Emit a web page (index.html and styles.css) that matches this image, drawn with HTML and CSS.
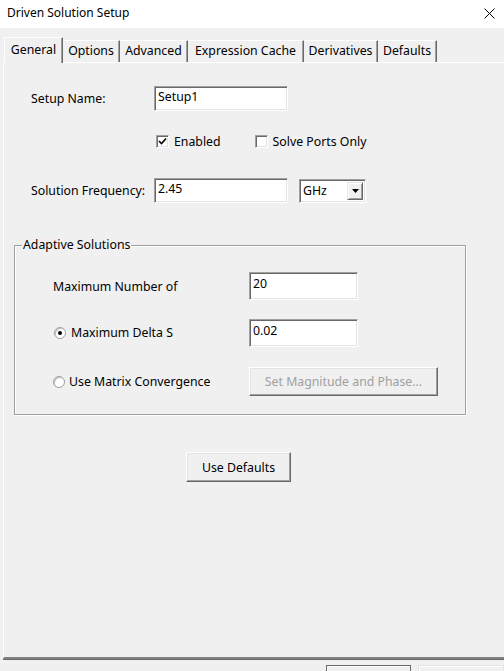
FILE: index.html
```html
<!DOCTYPE html>
<html>
<head>
<meta charset="utf-8">
<link rel="stylesheet" href="styles.css">
</head>
<body>
<div class="window">
  <div class="titlebar">
    <span class="title">Driven Solution Setup</span>
    <svg class="close" width="11" height="11" viewBox="0 0 11 11"><path d="M0.5 0.5 L10.5 10.5 M10.5 0.5 L0.5 10.5" stroke="#000" stroke-width="1"/></svg>
  </div>
  <div class="body">
    <div class="tabs">
      <div class="tab active t-general">General</div>
      <div class="tab t-options">Options</div>
      <div class="tab t-advanced">Advanced</div>
      <div class="tab t-cache">Expression Cache</div>
      <div class="tab t-deriv">Derivatives</div>
      <div class="tab t-defaults">Defaults</div>
    </div>
    <div class="page">
      <div class="row row-name">
        <span class="label">Setup Name:</span>
        <div class="edit edit-wide">Setup1</div>
      </div>
      <div class="row row-checks">
        <span class="check checked"><svg width="9" height="9" viewBox="0 0 9 9"><path d="M1 4 L3.5 6.5 L8 1.5" fill="none" stroke="#000" stroke-width="1.6"/></svg></span>
        <span class="check-text">Enabled</span>
        <span class="check check2"></span>
        <span class="check-text">Solve Ports Only</span>
      </div>
      <div class="row row-freq">
        <span class="label">Solution Frequency:</span>
        <div class="edit edit-wide">2.45</div>
        <div class="combo">
          <span class="combo-text">GHz</span>
          <span class="combo-btn"><svg width="7" height="4" viewBox="0 0 7 4"><path d="M0 0 H7 L3.5 4 Z" fill="#000"/></svg></span>
        </div>
      </div>
      <div class="group">
        <span class="legend">Adaptive Solutions</span>
        <div class="grow grow1">
          <span class="glabel">Maximum Number of</span>
          <div class="edit edit-small">20</div>
        </div>
        <div class="grow grow2">
          <span class="radio on"><span class="dot"></span></span>
          <span class="glabel-r">Maximum Delta S</span>
          <div class="edit edit-small">0.02</div>
        </div>
        <div class="grow grow3">
          <span class="radio radio3"></span>
          <span class="glabel-r3">Use Matrix Convergence</span>
          <div class="button disabled">Set Magnitude and Phase...</div>
        </div>
      </div>
      <div class="defaults-row">
        <div class="button defaults">Use Defaults</div>
      </div>
    </div>
    <div class="bottom">
      <div class="bbtn bbtn-default"></div>
      <div class="bbtn"></div>
    </div>
  </div>
</div>
</body>
</html>
```
FILE: styles.css
```css
* { box-sizing: border-box; }
html, body { margin: 0; padding: 0; }
body {
  width: 504px;
  height: 671px;
  overflow: hidden;
  background: #f0f0f0;
  font-family: "Noto Sans", "Open Sans", sans-serif;
  font-size: 12px;
  color: #000;
}
.window { width: 504px; height: 671px; display: flex; flex-direction: column; }
.titlebar {
  height: 28px;
  background: #fff;
  display: flex;
  align-items: center;
  justify-content: space-between;
  padding: 0 9px 2px 7px;
  flex: none;
}
.title { font-size: 12px; line-height: 16px; }
.close { display: block; margin-top: 1px; }
.body { flex: 1; display: flex; flex-direction: column; }
.tabs {
  height: 34px;
  display: flex;
  align-items: flex-end;
  padding-left: 4px;
  flex: none;
}
.tab {
  height: 22px;
  padding: 0;
  text-align: center;
  line-height: 20px;
  border-top: 1px solid #fff;
  border-right: 1px solid #696969;
  box-shadow: inset -1px 0 #a0a0a0;
  font-size: 12.3px;
  white-space: nowrap;
  flex: none;
}
.t-general { width: 59px; }
.t-options { width: 57px; }
.t-advanced { width: 68px; }
.t-cache { width: 116px; }
.t-deriv { width: 74px; }
.t-defaults { width: 59px; }
.tab.active {
  height: 26px;
  line-height: 24px;
  border-left: 1px solid #fff;
  margin-bottom: -1px;
  position: relative;
  z-index: 1;
  background: #f0f0f0;
  padding-bottom: 3px;
}
.page {
  height: 597px;
  margin-left: 3px;
  border-top: 1px solid #fff;
  border-left: 1px solid #fff;
  border-bottom: 2px solid #808080;
  box-shadow: 0 1px #696969;
  display: flex;
  flex-direction: column;
  flex: none;
}
.row { display: flex; align-items: center; padding-left: 27px; }
.label { width: 123px; font-size: 12.3px; }
.row-name { margin-top: 23px; height: 25px; }
.edit {
  background: #fff;
  border: 1px solid;
  border-color: #a0a0a0 #fff #fff #a0a0a0;
  box-shadow: inset 1px 1px #696969, inset -1px -1px #e3e3e3;
  font-size: 12.3px;
  padding: 0 3px;
  line-height: 20px;
}
.edit-wide { width: 134px; height: 25px; }
.row-checks { margin-top: 23px; height: 14px; padding-left: 152px; }
.check {
  width: 13px; height: 13px;
  background: #fff;
  border: 1px solid;
  border-color: #a0a0a0 #fff #fff #a0a0a0;
  box-shadow: inset 1px 1px #696969, inset -1px -1px #e3e3e3;
  display: flex; align-items: center; justify-content: center;
  flex: none;
}
.check svg { display: block; }
.check-text { margin-left: 5px; font-size: 12.3px; }
.check2 { margin-left: 34px; }
.row-freq { margin-top: 30px; height: 25px; }
.combo {
  margin-left: 11px;
  width: 67px; height: 24px;
  background: #fff;
  border: 1px solid;
  border-color: #a0a0a0 #fff #fff #a0a0a0;
  box-shadow: inset 1px 1px #696969, inset -1px -1px #e3e3e3;
  display: flex; align-items: center; justify-content: space-between;
  padding: 2px 2px 2px 3px;
}
.combo-text { font-size: 12.3px; }
.combo-btn {
  width: 16px; height: 18px;
  background: #f0f0f0;
  border: 1px solid;
  border-color: #e3e3e3 #696969 #696969 #e3e3e3;
  box-shadow: inset 1px 1px #fff, inset -1px -1px #a0a0a0;
  display: flex; align-items: center; justify-content: center;
}
.combo-btn svg { display: block; }
.group {
  margin-top: 42px;
  margin-left: 10px;
  width: 452px;
  height: 170px;
  border: 1px solid #a0a0a0;
  box-shadow: 1px 1px #fff, inset 1px 1px #fff;
  position: relative;
  display: flex;
  flex-direction: column;
}
.legend {
  position: absolute;
  top: -9px;
  left: 7px;
  background: #f0f0f0;
  padding: 0 1px;
  font-size: 12.3px;
  line-height: 16px;
}
.grow { display: flex; align-items: center; padding-left: 38px; }
.glabel { width: 196px; font-size: 12.3px; }
.grow1 { margin-top: 26px; height: 28px; }
.grow2 { margin-top: 18px; height: 29px; padding-left: 39px; }
.grow3 { margin-top: 20px; height: 29px; padding-left: 38px; }
.edit-small { width: 109px; height: 28px; line-height: 22px; }
.radio {
  width: 12px; height: 12px;
  border-radius: 50%;
  background: #fff;
  border: 1px solid #a0a0a0;
  box-shadow: inset 1px 1px #c0c0c0;
  display: flex; align-items: center; justify-content: center;
  flex: none;
}
.dot { width: 4px; height: 4px; border-radius: 50%; background: #000; }
.glabel-r { margin-left: 5px; width: 178px; font-size: 12.3px; }
.glabel-r3 { margin-left: 4px; width: 180px; font-size: 12.3px; }
.button {
  background: #f0f0f0;
  border: 1px solid;
  border-color: #fff #696969 #696969 #fff;
  box-shadow: inset -1px -1px #a0a0a0, inset 1px 1px #e3e3e3;
  display: flex; align-items: center; justify-content: center;
  font-size: 12.3px;
}
.disabled { width: 189px; height: 29px; color: #a0a0a0; }
.defaults-row { margin-top: 37px; padding-left: 182px; display: flex; }
.defaults { width: 105px; height: 30px; }
.bottom { display: flex; padding-left: 326px; gap: 7px; margin-top: 6px; }
.bbtn {
  width: 88px; height: 20px;
  border: 1px solid #696969;
  border-bottom: none;
  box-shadow: inset 1px 1px #fff;
}
.bbtn + .bbtn { border-color: #e3e3e3; width: 90px; }
```
